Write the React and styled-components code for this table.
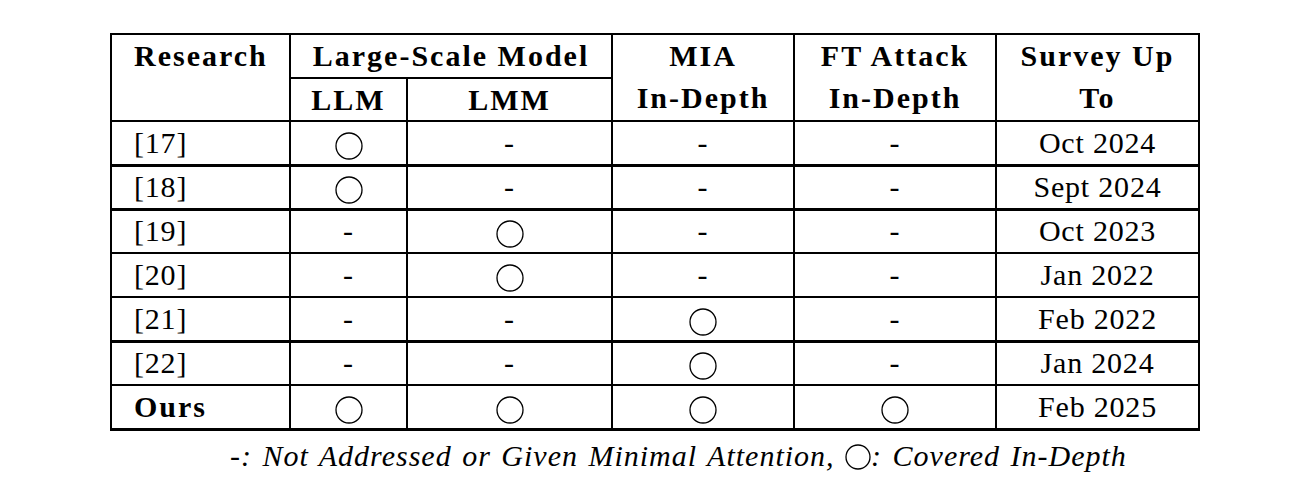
import styled, { createGlobalStyle } from "styled-components";

const GlobalStyle = createGlobalStyle`
  html, body {
    margin: 0;
    padding: 0;
    background: #fff;
  }
  body {
    font-family: "Liberation Serif", "Times New Roman", serif;
    color: #000;
  }
`;

const Page = styled.div`
  width: 1304px;
  height: 485px;
  padding-top: 33px;
  box-sizing: border-box;
  overflow: hidden;
`;

const Table = styled.table`
  margin-left: 110px;
  width: 1090px;
  border-collapse: collapse;
  table-layout: fixed;
  border: 2px solid #000;
  border-bottom-width: 3px;
  font-size: 30px;
`;

const HeadRow = styled.tr`
  height: ${(p) => p.$h}px;
`;

const HeadCell = styled.th`
  border: 2px solid #000;
  padding: 0;
  padding-left: ${(p) => (p.$left ? "22px" : "0")};
  text-align: ${(p) => (p.$left ? "left" : "center")};
  vertical-align: top;
  font-weight: 700;
  letter-spacing: 2px;
  line-height: 42px;
  white-space: nowrap;
`;

const SubHead = styled(HeadCell)`
  line-height: 40px;
  vertical-align: middle;
`;

const Row = styled.tr`
  height: 44px;
  & > td {
    border-bottom-width: ${(p) => (p.$thick ? "3px" : "2px")};
  }
`;

const Cell = styled.td`
  border: 2px solid #000;
  padding: 0 0 0 ${(p) => (p.$left ? "22px" : "0")};
  text-align: ${(p) => (p.$left ? "left" : "center")};
  vertical-align: middle;
  font-weight: ${(p) => (p.$bold ? 700 : 400)};
  letter-spacing: ${(p) => (p.$bold ? "2px" : "0.8px")};
  line-height: 40px;
  white-space: nowrap;
`;

const Mark = styled.svg`
  display: inline-block;
  vertical-align: middle;
  position: relative;
  top: ${(p) => p.$top || "0"};
`;

const Caption = styled.p`
  margin: 8px 0 0 230px;
  font-style: italic;
  font-size: 30px;
  letter-spacing: 1px;
  word-spacing: 2px;
  white-space: nowrap;
`;

function Circle({ size = 28, top }) {
  const r = size / 2 - 1;
  return (
    <Mark width={size} height={size} viewBox={`0 0 ${size} ${size}`} $top={top}>
      <circle cx={size / 2} cy={size / 2} r={r} fill="none" stroke="#000" strokeWidth="1.3" />
    </Mark>
  );
}

const O = "o";
const rows = [
  { ref: "[17]", llm: O, lmm: "-", mia: "-", ft: "-", date: "Oct 2024", thick: true },
  { ref: "[18]", llm: O, lmm: "-", mia: "-", ft: "-", date: "Sept 2024", thick: true },
  { ref: "[19]", llm: "-", lmm: O, mia: "-", ft: "-", date: "Oct 2023" },
  { ref: "[20]", llm: "-", lmm: O, mia: "-", ft: "-", date: "Jan 2022" },
  { ref: "[21]", llm: "-", lmm: "-", mia: O, ft: "-", date: "Feb 2022", thick: true },
  { ref: "[22]", llm: "-", lmm: "-", mia: O, ft: "-", date: "Jan 2024" },
  { ref: "Ours", bold: true, llm: O, lmm: O, mia: O, ft: O, date: "Feb 2025" },
];

function Value({ v }) {
  return v === O ? <Circle /> : v;
}

export default function App() {
  return (
    <>
      <GlobalStyle />
      <Page>
        <Table>
          <colgroup>
            <col style={{ width: 179 }} />
            <col style={{ width: 117 }} />
            <col style={{ width: 205 }} />
            <col style={{ width: 182 }} />
            <col style={{ width: 202 }} />
            <col style={{ width: 203 }} />
          </colgroup>
          <thead>
            <HeadRow $h={42}>
              <HeadCell rowSpan={2} $left>
                Research
              </HeadCell>
              <HeadCell colSpan={2}>Large-Scale Model</HeadCell>
              <HeadCell rowSpan={2}>
                MIA
                <br />
                In-Depth
              </HeadCell>
              <HeadCell rowSpan={2}>
                FT Attack
                <br />
                In-Depth
              </HeadCell>
              <HeadCell rowSpan={2}>
                Survey Up
                <br />
                To
              </HeadCell>
            </HeadRow>
            <HeadRow $h={43}>
              <SubHead>LLM</SubHead>
              <SubHead>LMM</SubHead>
            </HeadRow>
          </thead>
          <tbody>
            {rows.map((r) => (
              <Row key={r.ref} $thick={r.thick}>
                <Cell $left $bold={r.bold}>
                  {r.ref}
                </Cell>
                <Cell>
                  <Value v={r.llm} />
                </Cell>
                <Cell>
                  <Value v={r.lmm} />
                </Cell>
                <Cell>
                  <Value v={r.mia} />
                </Cell>
                <Cell>
                  <Value v={r.ft} />
                </Cell>
                <Cell>{r.date}</Cell>
              </Row>
            ))}
          </tbody>
        </Table>
        <Caption>
          -: Not Addressed or Given Minimal Attention, <Circle size={26} top="-2px" />: Covered In-Depth
        </Caption>
      </Page>
    </>
  );
}
